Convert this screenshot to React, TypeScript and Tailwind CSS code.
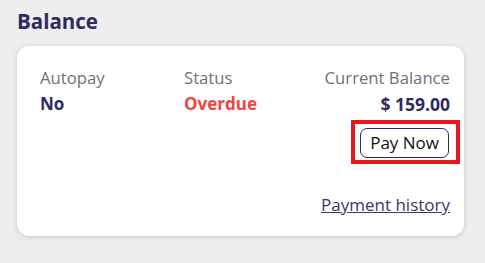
const App = () => {
  return (
    <div
      className="min-h-screen w-full bg-[#eeeeee] px-[17px] pt-[8px]"
      style={{ fontFamily: '"Open Sans", "Noto Sans", sans-serif' }}
    >
      <h2 className="text-[20.5px] font-bold leading-[27px] text-[#2f2b62]">Balance</h2>

      <div className="mt-[11px] w-[447px] h-[190px] rounded-[12px] bg-white shadow-[0_1px_5px_rgba(0,0,0,0.18)] pl-[23px] pr-[14px] pt-[21px] flex flex-col">
        <div className="flex">
          <div className="w-[144px]">
            <div className="text-[16.7px] leading-[22px] text-[#6b7280]">Autopay</div>
            <div className="mt-[2px] text-[17px] font-bold leading-[26px] text-[#2f2b62]">No</div>
          </div>
          <div className="flex-1">
            <div className="text-[16.7px] leading-[22px] text-[#6b7280]">Status</div>
            <div className="mt-[2px] text-[17px] font-bold leading-[26px] text-[#ef4444]">Overdue</div>
          </div>
          <div className="flex flex-col items-end">
            <div className="text-[16.7px] leading-[22px] text-[#6b7280]">Current Balance</div>
            <div className="mt-[2px] text-[17.5px] font-bold leading-[26px] text-[#2f2b62]">$ 159.00</div>
            <div className="mt-[3px] -mr-[10px] border-4 border-[#e8141e] pt-[4px] pb-[2px] pl-[5px] pr-[7px]">
              <button className="h-[30px] rounded-[7px] border border-[#2f2b62] px-[9px] text-[17px] leading-[20px] text-[#111]">
                Pay Now
              </button>
            </div>
          </div>
        </div>

        <div className="mt-auto mb-[20px] flex justify-end">
          <a href="#" className="text-[17px] leading-[22px] text-[#3b3670] underline">
            Payment history
          </a>
        </div>
      </div>
    </div>
  );
};

export default App;
